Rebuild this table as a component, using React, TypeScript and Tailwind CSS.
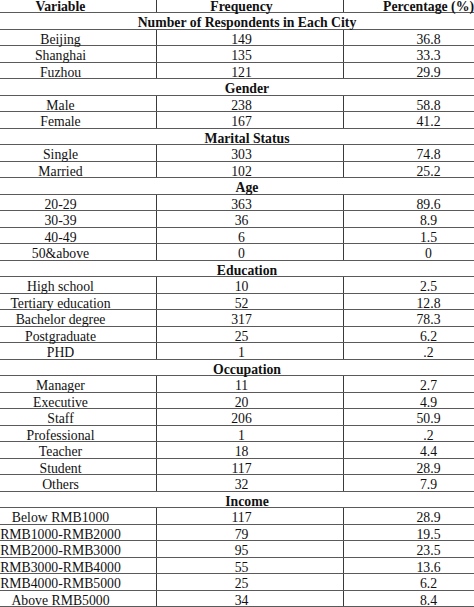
import React from 'react';

type Section = { title: string; rows: [string, string, string][] };

const sections: Section[] = [
    {
        title: 'Number of Respondents in Each City',
        rows: [
            ['Beijing', '149', '36.8'],
            ['Shanghai', '135', '33.3'],
            ['Fuzhou', '121', '29.9'],
        ],
    },
    {
        title: 'Gender',
        rows: [
            ['Male', '238', '58.8'],
            ['Female', '167', '41.2'],
        ],
    },
    {
        title: 'Marital Status',
        rows: [
            ['Single', '303', '74.8'],
            ['Married', '102', '25.2'],
        ],
    },
    {
        title: 'Age',
        rows: [
            ['20-29', '363', '89.6'],
            ['30-39', '36', '8.9'],
            ['40-49', '6', '1.5'],
            ['50&above', '0', '0'],
        ],
    },
    {
        title: 'Education',
        rows: [
            ['High school', '10', '2.5'],
            ['Tertiary education', '52', '12.8'],
            ['Bachelor degree', '317', '78.3'],
            ['Postgraduate', '25', '6.2'],
            ['PHD', '1', '.2'],
        ],
    },
    {
        title: 'Occupation',
        rows: [
            ['Manager', '11', '2.7'],
            ['Executive', '20', '4.9'],
            ['Staff', '206', '50.9'],
            ['Professional', '1', '.2'],
            ['Teacher', '18', '4.4'],
            ['Student', '117', '28.9'],
            ['Others', '32', '7.9'],
        ],
    },
    {
        title: 'Income',
        rows: [
            ['Below RMB1000', '117', '28.9'],
            ['RMB1000-RMB2000', '79', '19.5'],
            ['RMB2000-RMB3000', '95', '23.5'],
            ['RMB3000-RMB4000', '55', '13.6'],
            ['RMB4000-RMB5000', '25', '6.2'],
            ['Above RMB5000', '34', '8.4'],
        ],
    },
];

// the scan is stretched a little vertically, so glyphs get a small y-scale
function Txt({ children }: { children: React.ReactNode }) {
    return <span className="inline-block translate-y-[1.5px] scale-y-[1.12]">{children}</span>;
}

function Row({ cells, bold = false }: { cells: [string, string, string]; bold?: boolean }) {
    return (
        <div className={`flex h-[16.5px] border-b border-[#5a5a5a] ${bold ? 'font-bold' : ''}`}>
            <div className="w-[156px] shrink-0 pr-[35px] flex items-center justify-center whitespace-nowrap">
                <Txt>{cells[0]}</Txt>
            </div>
            <div className="w-[187px] shrink-0 border-l border-[#3a3a3a] pr-[17px] flex items-center justify-center whitespace-nowrap">
                <Txt>{cells[1]}</Txt>
            </div>
            <div className="flex-1 border-l border-[#3a3a3a] pl-[39px] flex items-center justify-center whitespace-nowrap">
                <Txt>{cells[2]}</Txt>
            </div>
        </div>
    );
}

export default function App() {
    return (
        <div className="w-[474px] h-[607px] overflow-hidden bg-white text-[#111] text-[13.75px] leading-[15.5px] font-['Liberation_Serif','Times_New_Roman',serif]">
            <div className="-mt-[3.5px]">
                <Row cells={['Variable', 'Frequency', 'Percentage (%)']} bold />
                {sections.map((section) => (
                    <React.Fragment key={section.title}>
                        <div className="h-[16.5px] border-b border-[#5a5a5a] pl-[20px] flex items-center justify-center font-bold whitespace-nowrap">
                            <Txt>{section.title}</Txt>
                        </div>
                        {section.rows.map((r) => (
                            <Row key={r[0]} cells={r} />
                        ))}
                    </React.Fragment>
                ))}
            </div>
        </div>
    );
}
